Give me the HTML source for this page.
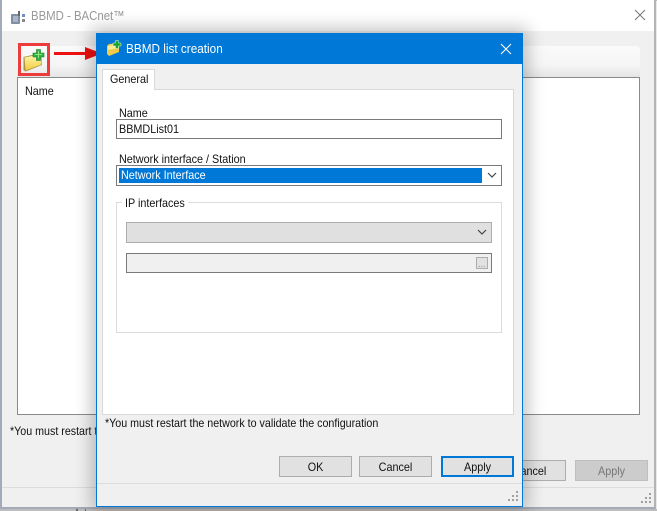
<!DOCTYPE html>
<html><head><meta charset="utf-8">
<style>
html,body{margin:0;padding:0;width:657px;height:511px;overflow:hidden;background:#fff}
body{position:relative;font-family:"Liberation Sans",sans-serif;font-size:12px;color:#111}
div,span,svg{position:absolute;box-sizing:border-box}
.t{white-space:nowrap;line-height:14px;transform:scaleX(.9);transform-origin:0 0}
.btn{background:#e1e1e1;border:1px solid #adadad}
.btn div{left:0;right:0;top:0;bottom:0;text-align:center;line-height:20px;white-space:nowrap;transform:scaleX(.9)}
</style></head>
<body>
<div style="left:0;top:0;width:657px;height:511px;background:#e9e9e9"></div>
<div style="left:366px;top:0;width:291px;height:1px;background:#bbb"></div>
<div style="left:0;top:509px;width:657px;height:2px;background:#bdbdbd"></div>
<div style="left:76px;top:509px;width:2px;height:2px;background:#666"></div>
<div style="left:85px;top:509px;width:1px;height:2px;background:#666"></div>
<div style="left:0;top:0;width:656px;height:509px;background:#f0f0f0;border:2px solid #a3abb8;border-top:none;border-right:2px solid #b4b4b4;border-bottom:2px solid #a3abb8"></div>
<div style="left:2px;top:0;width:652px;height:31px;background:#fff"></div>
<svg style="left:11px;top:9px" width="16" height="16" viewBox="0 0 16 16"><rect x="0" y="5" width="9" height="10" rx="1" fill="#7f8ea3"/><rect x="2" y="7" width="5" height="6" fill="#a9b6c8"/><rect x="7" y="2" width="2" height="5" fill="#666"/><rect x="11" y="5" width="3" height="3" fill="#6f8fc0"/><rect x="11" y="10" width="3" height="3" fill="#8a8a8a"/></svg>
<div class="t" style="left:31px;top:9px;font-size:13px;color:#999;transform:scaleX(.875)">BBMD - BACnet™</div>
<svg style="left:634px;top:9px" width="12" height="12" viewBox="0 0 12 12"><path d="M1 1L11 11M11 1L1 11" stroke="#777" stroke-width="1" fill="none"/></svg>

<div style="left:17px;top:46px;width:623px;height:32px;border-radius:3px 3px 0 0;background:linear-gradient(#fafafa,#f5f5f5 60%,#e4e4e4)"></div>
<div style="left:17px;top:77px;width:623px;height:338px;background:#fff;border:1px solid #8a8a8a"></div>
<div class="t" style="left:25px;top:84px">Name</div>
<div style="left:18px;top:43px;width:32px;height:33px;border:3px solid #ee3b3b"></div>
<svg style="left:22px;top:47px" width="24" height="26" viewBox="0 0 24 26"><defs><linearGradient id="g" x1="0" y1="0" x2="0" y2="1"><stop offset="0" stop-color="#fdf8b8"/><stop offset="1" stop-color="#f2cc3a"/></linearGradient></defs><path d="M1.500 10L8 8.500L20 6L20 18L3.500 24.500L1.500 23Z" fill="#a8903f"/><path d="M2.500 10.500L19.500 7L19.500 17.500L3.500 23.500Z" fill="url(#g)"/><path d="M14.500 2.500h4v3.500h3.500v4h-3.500v3.500h-4v-3.500h-3.500v-4h3.500z" fill="#2bb53f" stroke="#157a27" stroke-width=".6"/><path d="M16 4h1v3h3v1h-3v3h-1v-3h-3v-1h3z" fill="#8fe584"/></svg>
<div style="left:54px;top:52px;width:32px;height:3px;background:#ee1111"></div>
<svg style="left:85px;top:47px" width="18" height="13" viewBox="0 0 18 13"><path d="M0 0L17 6.500L0 13Z" fill="#ee1111"/></svg>
<div class="t" style="left:10px;top:424px;transform:scaleX(.89)">*You must restart t</div>
<div style="left:2px;top:487px;width:652px;height:1px;background:#dcdcdc"></div>
<div class="btn" style="left:493px;top:460px;width:73px;height:21px"><div>Cancel</div></div>
<div class="btn" style="left:575px;top:460px;width:73px;height:21px;background:#ccc;border-color:#bfbfbf;color:#777"><div>Apply</div></div>
<svg style="left:641px;top:493px" width="12" height="12" viewBox="0 0 12 12"><g fill="#a0a0a0"><rect x="8" y="0" width="2" height="2"/><rect x="4" y="4" width="2" height="2"/><rect x="8" y="4" width="2" height="2"/><rect x="0" y="8" width="2" height="2"/><rect x="4" y="8" width="2" height="2"/><rect x="8" y="8" width="2" height="2"/></g></svg>

<!-- dialog -->
<div style="left:96px;top:33px;width:427px;height:474px;background:#f0f0f0;border:1px solid #0078d7;box-shadow:0 0 16px 5px rgba(0,0,0,.24)"></div>
<div style="left:96px;top:33px;width:426px;height:31px;background:#0078d7"></div>
<svg style="left:105px;top:38px" width="17" height="19" viewBox="0 0 17 19"><path d="M2 8L4 6L14 5L14 14L4 18L2 16Z" fill="#f2c94a"/><path d="M3 8L14 6L14 10L3 12Z" fill="#fbeb96"/><path d="M10.500 2.500h3v2.500h2.500v3h-2.500v2.500h-3v-2.500h-2.500v-3h2.500z" fill="#18a532" stroke="#e6fbe6" stroke-width=".5"/></svg>
<div class="t" style="left:126px;top:42px;color:#fff;font-size:13px;transform:scaleX(.905)">BBMD list creation</div>
<svg style="left:500px;top:43px" width="12" height="12" viewBox="0 0 12 12"><path d="M1 1L11 11M11 1L1 11" stroke="#fff" stroke-width="1.100" fill="none"/></svg>

<div style="left:102px;top:89px;width:412px;height:326px;background:#fff;border:1px solid #d9d9d9"></div>
<div style="left:102px;top:69px;width:53px;height:21px;background:#fff;border:1px solid #d9d9d9;border-bottom:none"></div>
<div class="t" style="left:110px;top:72px">General</div>

<div class="t" style="left:119px;top:106px">Name</div>
<div style="left:116px;top:119px;width:386px;height:20px;background:#fff;border:1px solid #7a7a7a"></div>
<div class="t" style="left:119px;top:122px">BBMDList01</div>
<div class="t" style="left:119px;top:152px">Network interface / Station</div>
<div style="left:116px;top:165px;width:386px;height:21px;background:#fff;border:1px solid #7a7a7a"></div>
<div style="left:119px;top:168px;width:363px;height:15px;background:#0078d7"></div>
<div class="t" style="left:121px;top:168px;color:#fff">Network Interface</div>
<svg style="left:487px;top:172px" width="10" height="7" viewBox="0 0 10 7"><path d="M1 1L5 5L9 1" stroke="#444" stroke-width="1.200" fill="none"/></svg>

<div style="left:116px;top:202px;width:386px;height:131px;border:1px solid #dcdcdc"></div>
<div style="left:122px;top:197px;width:66px;height:12px;background:#fff"></div>
<div class="t" style="left:125px;top:196px">IP interfaces</div>
<div style="left:126px;top:222px;width:366px;height:21px;background:#e0e0e0;border:1px solid #adadad"></div>
<svg style="left:477px;top:229px" width="10" height="7" viewBox="0 0 10 7"><path d="M1 1L5 5L9 1" stroke="#444" stroke-width="1.200" fill="none"/></svg>
<div style="left:126px;top:253px;width:366px;height:20px;background:#f0f0f0;border:1px solid #7a7a7a"></div>
<div style="left:476px;top:257px;width:12px;height:12px;background:#e1e1e1;border:1px solid #adadad"></div>
<div class="t" style="left:478px;top:257px;font-size:9px;color:#888;transform:none">...</div>

<div class="t" style="left:105px;top:416px;transform:scaleX(.89)">*You must restart the network to validate the configuration</div>
<div class="btn" style="left:279px;top:456px;width:73px;height:21px"><div>OK</div></div>
<div class="btn" style="left:359px;top:456px;width:73px;height:21px"><div>Cancel</div></div>
<div class="btn" style="left:441px;top:456px;width:73px;height:21px;border:2px solid #0078d7"><div style="line-height:18px">Apply</div></div>
<div style="left:97px;top:483px;width:425px;height:1px;background:#dcdcdc"></div>
<svg style="left:508px;top:491px" width="12" height="12" viewBox="0 0 12 12"><g fill="#a0a0a0"><rect x="8" y="0" width="2" height="2"/><rect x="4" y="4" width="2" height="2"/><rect x="8" y="4" width="2" height="2"/><rect x="0" y="8" width="2" height="2"/><rect x="4" y="8" width="2" height="2"/><rect x="8" y="8" width="2" height="2"/></g></svg>
</body></html>
